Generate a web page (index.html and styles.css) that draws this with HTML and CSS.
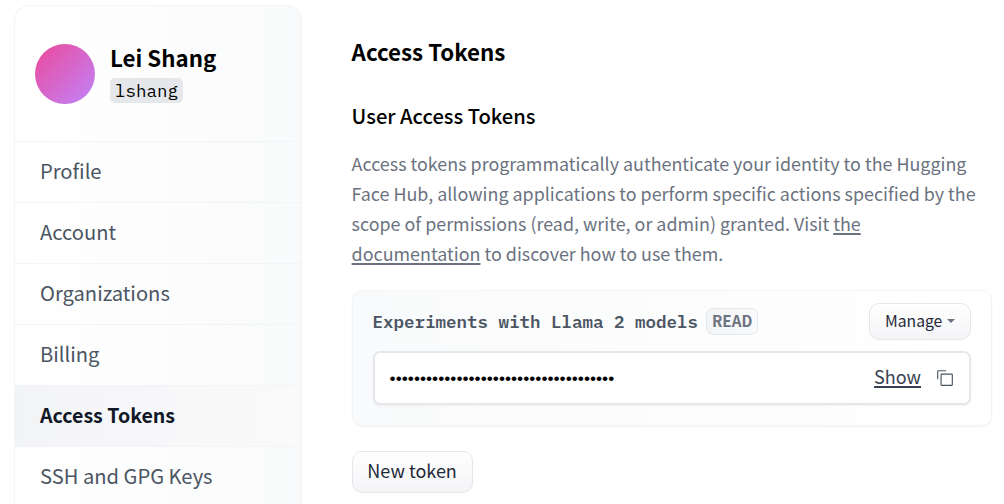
FILE: index.html
```html
<!DOCTYPE html>
<html lang="en">
<head>
  <meta charset="UTF-8" />
  <meta name="viewport" content="width=device-width, initial-scale=1.0"/>
  <title>Access Tokens</title>
  <link rel="stylesheet" href="styles.css">
</head>
<body>

  <div class="page">
    <!-- Sidebar -->
    <aside class="sidebar">
      <div class="user">
        <div class="avatar"></div>
        <div>
          <div class="user-name">Lei Shang</div>
          <code class="user-handle">lshang</code>
        </div>
      </div>
      <nav class="menu">
        <a class="menu-item">Profile</a>
        <a class="menu-item">Account</a>
        <a class="menu-item">Organizations</a>
        <a class="menu-item">Billing</a>
        <a class="menu-item active">Access Tokens</a>
        <a class="menu-item">SSH and GPG Keys</a>
      </nav>
    </aside>

    <!-- Content -->
    <main class="content">
      <h1>Access Tokens</h1>
      <h2>User Access Tokens</h2>
      <p class="intro">Access tokens programmatically authenticate your identity to the Hugging<br>
        Face Hub, allowing applications to perform specific actions specified by the<br>
        scope of permissions (read, write, or admin) granted. Visit <a class="link">the<br>
        documentation</a> to discover how to use them.</p>

      <div class="token-card">
        <div class="token-head">
          <span class="token-name">Experiments with Llama 2 models</span>
          <span class="badge">READ</span>
          <button class="btn btn-manage">Manage
            <svg class="caret" width="8" height="4" viewBox="0 0 8 4"><path d="M0 0h8L4 4z" fill="#6b7280"/></svg>
          </button>
        </div>
        <div class="token-field">
          <span class="dots">•••••••••••••••••••••••••••••••••••••</span>
          <a class="show">Show</a>
          <svg class="copy" width="18" height="18" viewBox="0 0 32 32" fill="#4b5563">
            <path d="M28 10v18H10V10h18m0-2H10a2 2 0 0 0-2 2v18a2 2 0 0 0 2 2h18a2 2 0 0 0 2-2V10a2 2 0 0 0-2-2z"/>
            <path d="M4 18H2V4a2 2 0 0 1 2-2h14v2H4z"/>
          </svg>
        </div>
      </div>

      <button class="btn btn-new">New token</button>
    </main>
  </div>

</body>
</html>
```
FILE: styles.css
```css
* {
  box-sizing: border-box;
}

body {
  margin: 0;
  background: white;
  font-family: 'Source Sans Pro', 'Noto Sans CJK SC', sans-serif;
  color: #000;
}

.page {
  display: flex;
  gap: 49.6px;
  height: 504px;
  padding: 5px 12px 0 14px;
  overflow: hidden;
}

/* Sidebar */
.sidebar {
  flex: none;
  width: 288px;
  height: 560px;
  border: 1px solid #f3f4f6;
  border-radius: 15px;
  background: linear-gradient(to right, #fff, #f9fafb);
}

.user {
  display: flex;
  align-items: center;
  gap: 15px;
  height: 135px;
  padding-left: 20px;
}

.avatar {
  width: 60px;
  height: 60px;
  border-radius: 50%;
  background: linear-gradient(to bottom right, #ec4899, #c084fc);
}

.user-name {
  height: 30px;
  font-size: 22.3px;
  font-weight: bold;
  line-height: 27px;
}

.user-handle {
  display: block;
  width: 73px;
  height: 25px;
  margin-top: 4px;
  padding-left: 5px;
  border-radius: 5px;
  background: #e5e7eb;
  font-family: 'IBM Plex Mono', 'Liberation Mono', monospace;
  font-size: 17.5px;
  line-height: 25px;
}

.menu-item {
  display: block;
  height: 61px;
  padding-left: 25px;
  border-top: 1px solid #f3f4f6;
  font-size: 20.15px;
  line-height: 58px;
  color: #4b5563;
}

.menu-item.active {
  background: linear-gradient(to right, #f3f4f6, #fafafb);
  color: #111827;
  font-size: 19.6px;
  font-weight: 600;
}

/* Content */
.content {
  flex: 1;
  min-width: 0;
}

h1 {
  margin: 28px 0 0;
  font-size: 22.3px;
  font-weight: 600;
  line-height: 36px;
}

h2 {
  margin: 32px 0 0;
  font-size: 20.15px;
  font-weight: 500;
  line-height: 30px;
}

.intro {
  margin: 17px 0 0;
  font-size: 17.9px;
  line-height: 30px;
  color: #6b7280;
  white-space: nowrap;
}

.link,
.show {
  text-decoration: underline;
  text-decoration-thickness: 2px;
  text-underline-offset: 2px;
}

.token-card {
  height: 136px;
  margin-top: 22px;
  padding: 12px 20px 0;
  border: 1px solid #f3f4f6;
  border-radius: 10px;
  background: linear-gradient(to right, #f9fafb, #fff);
  box-shadow: 0 1px 2px rgba(0, 0, 0, 0.05);
}

.token-head {
  display: flex;
  align-items: center;
  height: 37px;
}

.token-name {
  font-family: 'IBM Plex Mono', 'Liberation Mono', monospace;
  font-size: 17.5px;
  font-weight: 600;
  color: #4b5563;
}

.badge {
  width: 52px;
  height: 27px;
  margin-left: 8px;
  border: 1px solid #e5e7eb;
  border-radius: 7px;
  background: linear-gradient(to right, #f3f4f6, #f9fafb);
  font-size: 15.2px;
  font-weight: 600;
  line-height: 23px;
  text-align: center;
  color: #6b7280;
}

.btn {
  border: 1px solid #e5e7eb;
  border-radius: 10px;
  background: linear-gradient(to bottom, #fff, #f3f4f6);
  font-family: inherit;
  color: #1f2937;
}

.btn-manage {
  display: flex;
  align-items: center;
  gap: 5px;
  width: 102px;
  height: 37px;
  margin-left: auto;
  padding: 0 0 2px 15px;
  font-size: 15.7px;
}

.token-field {
  display: flex;
  align-items: center;
  height: 54px;
  margin-top: 11px;
  padding: 0 15px;
  border: 2px solid #e5e7eb;
  border-radius: 7px;
  background: white;
  box-shadow: 0 1px 2px rgba(0, 0, 0, 0.05);
}

.dots {
  flex: 1;
  font-family: 'Liberation Sans', sans-serif;
  font-size: 17.35px;
  line-height: 20px;
}

.show {
  font-size: 18px;
  line-height: 26px;
  padding-bottom: 4px;
  color: #374151;
}

.copy {
  margin-left: 15px;
}

.btn-new {
  display: block;
  width: 121px;
  height: 42px;
  margin-top: 25px;
  padding: 0 0 5px;
  font-size: 18px;
}
```
